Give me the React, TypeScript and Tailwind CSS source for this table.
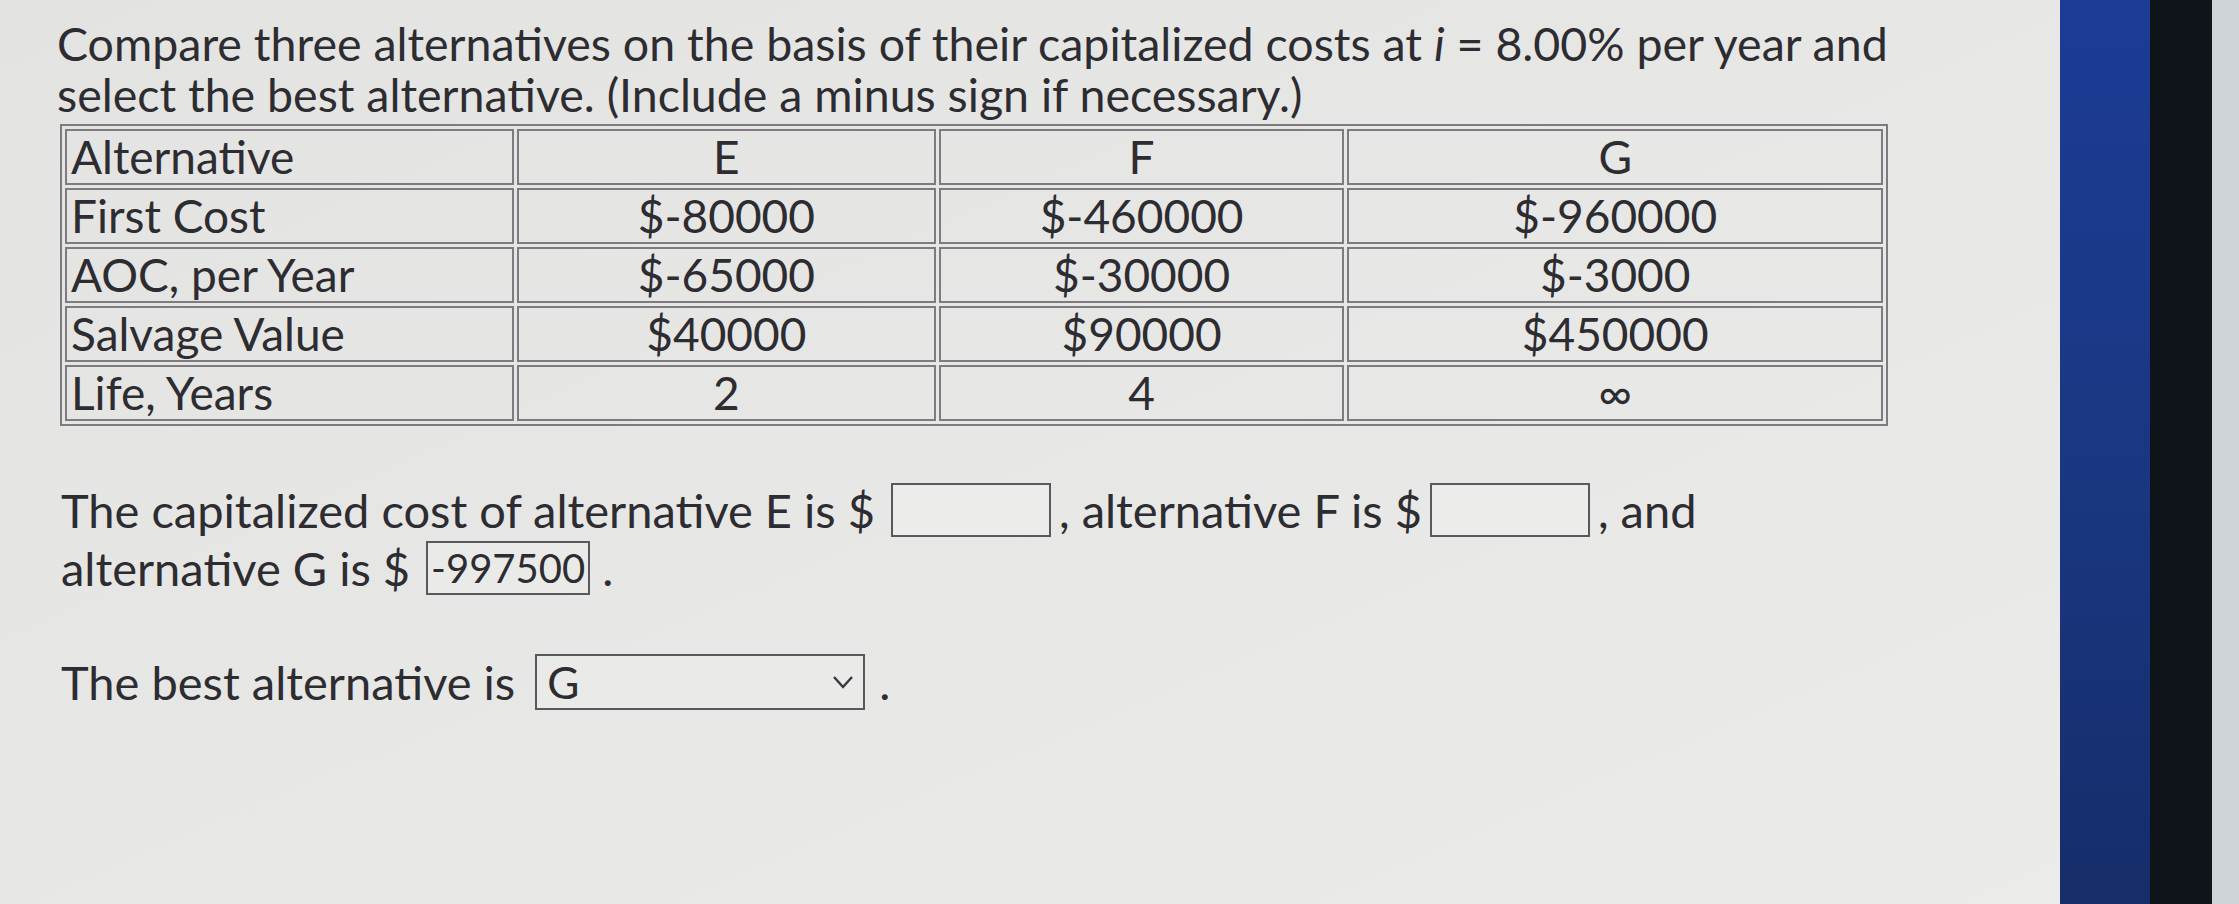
import React from "react";

const rows: [string, string, string, string][] = [
  ["First Cost", "$-80000", "$-460000", "$-960000"],
  ["AOC, per Year", "$-65000", "$-30000", "$-3000"],
  ["Salvage Value", "$40000", "$90000", "$450000"],
  ["Life, Years", "2", "4", "∞"],
];

function Cell({ children, left, w }: { children: React.ReactNode; left?: boolean; w: string }) {
  return (
    <td
      className={`border-2 border-[#7d7a80] h-[56px] p-0 align-middle ${w} ${
        left ? "text-left pl-[4px]" : "text-center"
      }`}
    >
      {children}
    </td>
  );
}

export default function App() {
  return (
    <div className="flex h-[904px] w-[2239px] overflow-hidden font-[Lato,'Open_Sans',sans-serif]">
      <div className="w-[2060px] shrink-0 bg-gradient-to-br from-[#e3e3e2] to-[#ebebea] pl-[57px] pt-[18px] text-[#2d2c31]">
        <p className="text-[46.5px] leading-[51px] w-[1960px]">
          Compare three alternatives on the basis of their capitalized costs at <i>i</i> = 8.00% per year and
          <br />
          select the best alternative. (Include a minus sign if necessary.)
        </p>
        <table className="mt-[4px] ml-[3px] w-[1828px] border-separate border-spacing-[3px] border-2 border-[#7d7a80] text-[46px] leading-none">
          <tbody>
            <tr>
              <Cell left w="w-[446px]">Alternative</Cell>
              <Cell w="w-[416px]">E</Cell>
              <Cell w="w-[403px]">F</Cell>
              <Cell w="w-[532px]">G</Cell>
            </tr>
            {rows.map((r) => (
              <tr key={r[0]}>
                <Cell left w="w-[446px]">{r[0]}</Cell>
                <Cell w="w-[416px]">{r[1]}</Cell>
                <Cell w="w-[403px]">{r[2]}</Cell>
                <Cell w="w-[532px]">{r[3]}</Cell>
              </tr>
            ))}
          </tbody>
        </table>

        <div className="mt-[55px] pl-[4px] text-[47px] leading-[58px]">
          <div className="flex items-center">
            <span>The capitalized cost of alternative E is $</span>
            <span className="ml-[16px] inline-block h-[54px] w-[160px] border-2 border-[#5a585c] bg-[#ececeb]" />
            <span className="ml-[8px]">, alternative F is $</span>
            <span className="ml-[8px] inline-block h-[54px] w-[160px] border-2 border-[#5a585c] bg-[#ececeb]" />
            <span className="ml-[8px]">, and</span>
          </div>
          <div className="flex items-center">
            <span>alternative G is $</span>
            <span className="ml-[16px] inline-flex h-[54px] items-center border-2 border-[#5a585c] bg-[#eaeae9] px-[3px] text-[40px]">
              -997500
            </span>
            <span className="ml-[12px]">.</span>
          </div>
          <div className="mt-[56px] flex items-center">
            <span>The best alternative is</span>
            <span className="ml-[20px] inline-flex h-[56px] w-[330px] items-center justify-between border-2 border-[#5a585c] bg-[#eaeae9] pl-[10px] pr-[8px] text-[44px]">
              <span>G</span>
              <svg width="24" height="16" viewBox="0 0 24 16" fill="none" stroke="#3a393d" strokeWidth="2.5">
                <path d="M3 3 L12 13 L21 3" />
              </svg>
            </span>
            <span className="ml-[14px]">.</span>
          </div>
        </div>
      </div>
      <div className="w-[90px] shrink-0 bg-gradient-to-b from-[#1c3c96] via-[#1a3782] to-[#152d6a]" />
      <div className="w-[62px] shrink-0 bg-[#0f131a]" />
      <div className="flex-1 bg-[#cfd4d9]" />
    </div>
  );
}
